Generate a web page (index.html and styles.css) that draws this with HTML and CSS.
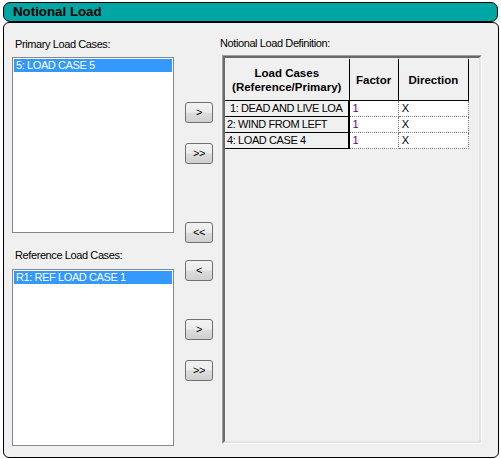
FILE: index.html
```html
<!DOCTYPE html>
<html>
<head>
<meta charset="utf-8">
<link rel="stylesheet" href="styles.css">
</head>
<body>
<div class="title-bar">Notional Load</div>
<div class="panel">
  <div class="left-col">
    <div class="label first">Primary Load Cases:</div>
    <div class="listbox primary">
      <div class="item selected">5: LOAD CASE 5</div>
    </div>
    <div class="label second">Reference Load Cases:</div>
    <div class="listbox reference">
      <div class="item selected">R1: REF LOAD CASE 1</div>
    </div>
  </div>
  <div class="btn-col">
    <button class="btn b1">&gt;</button>
    <button class="btn b2">&gt;&gt;</button>
    <button class="btn b3">&lt;&lt;</button>
    <button class="btn b4">&lt;</button>
    <button class="btn b5">&gt;</button>
    <button class="btn b6">&gt;&gt;</button>
  </div>
  <div class="right-col">
    <div class="label first">Notional Load Definition:</div>
    <div class="grid-outer">
      <div class="grid-inner">
        <table class="grid">
          <tr class="head">
            <th class="c1">Load Cases<br>(Reference/Primary)</th>
            <th class="c2">Factor</th>
            <th class="c3">Direction</th>
          </tr>
          <tr>
            <td class="c1 r1">1: DEAD AND LIVE LOA</td>
            <td class="c2">1</td>
            <td class="c3">X</td>
          </tr>
          <tr>
            <td class="c1">2: WIND FROM LEFT</td>
            <td class="c2">1</td>
            <td class="c3">X</td>
          </tr>
          <tr>
            <td class="c1">4: LOAD CASE 4</td>
            <td class="c2">1</td>
            <td class="c3">X</td>
          </tr>
        </table>
      </div>
    </div>
  </div>
</div>
</body>
</html>
```
FILE: styles.css
```css
html, body {
  margin: 0;
  padding: 0;
  background: #ffffff;
}
body {
  font-family: "Liberation Sans", Arial, sans-serif;
  font-size: 11px;
  letter-spacing: -0.4px;
  color: #000;
  padding-top: 2px;
}
.title-bar {
  margin-left: 3px;
  width: 495px;
  height: 20px;
  box-sizing: border-box;
  background: #00a6a4;
  border: 1px solid #000;
  border-radius: 7px;
  font-size: 13.3px;
  font-weight: bold;
  letter-spacing: 0;
  line-height: 18px;
  padding-left: 9px;
}
.panel {
  margin-left: 3px;
  width: 496px;
  height: 436px;
  box-sizing: border-box;
  background: #f0f0f0;
  border: 1px solid #000;
  border-radius: 6px;
  display: flex;
}
.left-col {
  margin-left: 8px;
  width: 162px;
  display: flex;
  flex-direction: column;
}
.label {
  line-height: 13px;
  height: 13px;
  white-space: nowrap;
}
.left-col .label.first {
  margin-top: 15px;
  margin-left: 3px;
  margin-bottom: 6px;
}
.left-col .label.second {
  margin-top: 16px;
  margin-left: 3px;
  margin-bottom: 7px;
}
.listbox {
  background: #fff;
  border: 1px solid #828790;
  box-sizing: border-box;
  padding: 1px;
}
.listbox.primary { height: 176px; }
.listbox.reference { height: 177px; }
.item {
  height: 13px;
  line-height: 13px;
  padding-left: 2px;
  white-space: nowrap;
}
.item.selected {
  background: #3399ff;
  color: #fff;
}
.btn-col {
  margin-left: 11px;
  width: 28px;
  display: flex;
  flex-direction: column;
}
.btn {
  width: 28px;
  height: 21px;
  box-sizing: border-box;
  padding: 0;
  border: 1px solid #707070;
  border-radius: 3px;
  background: linear-gradient(#f2f2f2 0%, #ebebeb 48%, #dddddd 52%, #cfcfcf 100%);
  font-family: "Liberation Sans", Arial, sans-serif;
  font-size: 11px;
  letter-spacing: -0.5px;
  color: #000;
  line-height: 17px;
}
.b1 { margin-top: 79px; }
.b2 { margin-top: 20px; }
.b3 { margin-top: 58px; }
.b4 { margin-top: 17px; }
.b5 { margin-top: 38px; }
.b6 { margin-top: 20px; }
.right-col {
  margin-left: 7px;
  display: flex;
  flex-direction: column;
}
.right-col .label.first {
  margin-top: 14px;
  margin-bottom: 5px;
}
.grid-outer {
  margin-left: 2px;
  width: 260px;
  height: 389px;
  box-sizing: border-box;
  border: 1px solid;
  border-color: #a0a0a0 #ffffff #ffffff #a0a0a0;
}
.grid-inner {
  height: 100%;
  box-sizing: border-box;
  border: 2px solid;
  border-color: #696969 #e3e3e3 #e3e3e3 #696969;
  background: #f0f0f0;
  padding-top: 1px;
}
.grid {
  border-collapse: separate;
  border-spacing: 0;
  table-layout: fixed;
  width: 244px;
}
.grid th {
  background: #f0f0f0;
  font-weight: bold;
  font-size: 11.5px;
  letter-spacing: 0;
  height: 41px;
  padding: 0;
  border-right: 1px solid #000;
  border-bottom: 1px solid #000;
  text-align: center;
  vertical-align: middle;
  line-height: 14px;
}
.grid th.c1 { width: 123px; }
.grid th.c2 { width: 48px; }
.grid th.c3 { width: 69px; }
.grid td {
  height: 15px;
  padding: 0 0 0 3px;
  line-height: 15px;
  white-space: nowrap;
  overflow: hidden;
  background: #fff;
  border-right: 1px dotted #808080;
  border-bottom: 1px dotted #808080;
}
.grid td.c1 {
  background: #f0f0f0;
  border-right: 2px solid #000;
  border-bottom: 1px solid #000;
  padding-left: 2px;
}
.grid td.c1.r1 { padding-left: 5px; }
.grid td.c2 {
  color: #6a006a;
  padding-left: 3px;
}
```
